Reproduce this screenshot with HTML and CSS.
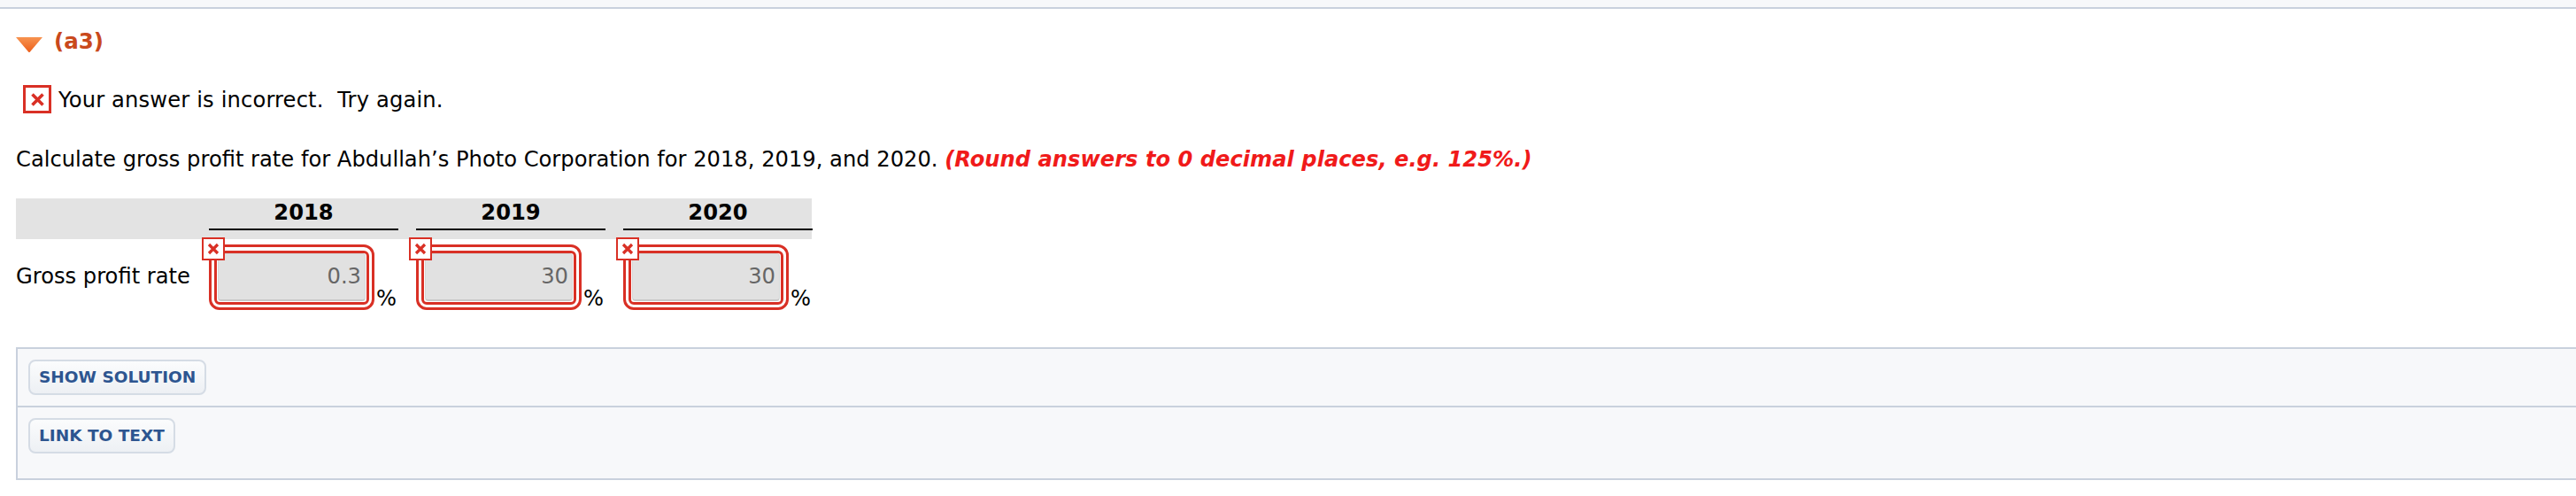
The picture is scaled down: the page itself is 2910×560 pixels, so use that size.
FILE: index.html
```html
<!DOCTYPE html>
<html lang="en">
<head>
    <meta charset="UTF-8">
    <meta name="viewport" content="width=device-width, initial-scale=1.0">
    <title>Question a3</title>
    <link rel="stylesheet" href="styles.css">
</head>
<body>
    <div class="top-bar"></div>

    <h2 class="part-title">
        <svg class="part-arrow" width="30" height="17" viewBox="0 0 30 17">
            <defs>
                <linearGradient id="arrowFill" x1="0" y1="0" x2="0" y2="1">
                    <stop offset="0" stop-color="#f79350"/>
                    <stop offset="1" stop-color="#ec5f1a"/>
                </linearGradient>
            </defs>
            <path d="M0 0H30L15.5 17H14.5Z" fill="url(#arrowFill)"/>
        </svg>
        (a3)
    </h2>

    <p class="feedback">
        <span class="x-box x-box-large">
            <svg width="17" height="17" viewBox="0 0 17 17"><path d="M2.5 2.5L14.5 14.5M14.5 2.5L2.5 14.5" stroke="#d93025" stroke-width="3.6" fill="none"/></svg>
        </span>
        <span class="feedback-text">Your answer is incorrect.&nbsp; Try again.</span>
    </p>

    <p class="question">Calculate gross profit rate for Abdullah’s Photo Corporation for 2018, 2019, and 2020. <em class="hint">(Round answers to 0 decimal places, e.g. 125%.)</em></p>

    <div class="answers">
        <div class="answers-head">
            <div class="year">2018</div>
            <div class="year">2019</div>
            <div class="year">2020</div>
        </div>
        <div class="answers-row">
            <label class="row-label">Gross profit rate</label>
            <div class="cells">
                <div class="cell">
                    <span class="x-box x-box-small">
                        <svg width="14" height="14" viewBox="0 0 14 14"><path d="M2 2L12 12M12 2L2 12" stroke="#d93025" stroke-width="3.2" fill="none"/></svg>
                    </span>
                    <div class="ring"><div class="ring-inner"><input class="field" type="text" value="0.3" disabled></div></div>
                    <span class="unit">%</span>
                </div>
                <div class="cell">
                    <span class="x-box x-box-small">
                        <svg width="14" height="14" viewBox="0 0 14 14"><path d="M2 2L12 12M12 2L2 12" stroke="#d93025" stroke-width="3.2" fill="none"/></svg>
                    </span>
                    <div class="ring"><div class="ring-inner"><input class="field" type="text" value="30" disabled></div></div>
                    <span class="unit">%</span>
                </div>
                <div class="cell">
                    <span class="x-box x-box-small">
                        <svg width="14" height="14" viewBox="0 0 14 14"><path d="M2 2L12 12M12 2L2 12" stroke="#d93025" stroke-width="3.2" fill="none"/></svg>
                    </span>
                    <div class="ring"><div class="ring-inner"><input class="field" type="text" value="30" disabled></div></div>
                    <span class="unit">%</span>
                </div>
            </div>
        </div>
    </div>

    <div class="actions">
        <div class="action-row"><a class="action-button">SHOW SOLUTION</a></div>
        <div class="action-row action-row-last"><a class="action-button">LINK TO TEXT</a></div>
    </div>
</body>
</html>
```

FILE: styles.css
```css
body {
    margin: 0;
    height: 560px;
    overflow: hidden;
    background-color: #fff;
    color: #000;
    font-family: "DejaVu Sans", Verdana, sans-serif;
    font-size: 24.2px;
}
.top-bar {
    height: 8px;
    background-color: #f7f8fa;
    border-bottom: 2px solid #c9d1dd;
}
.part-title {
    display: flex;
    align-items: center;
    gap: 13px;
    margin: 0;
    padding: 22px 0 0 18px;
    height: 30px;
    color: #c9491c;
    font-size: 24.5px;
    font-weight: bold;
    line-height: 30px;
}
.part-arrow {
    margin-top: 6px;
}
.feedback {
    display: flex;
    align-items: center;
    gap: 8px;
    margin: 0;
    padding: 34px 0 0 26px;
    height: 32px;
    line-height: 32px;
}
.feedback-text {
    padding-top: 2px;
    letter-spacing: 0.15px;
}
.x-box {
    display: flex;
    align-items: center;
    justify-content: center;
    box-sizing: border-box;
    background-color: #fff;
    border: 3px solid #d93025;
}
.x-box-large {
    width: 32px;
    height: 32px;
}
.x-box-small {
    position: absolute;
    left: -8px;
    top: -8px;
    width: 26px;
    height: 26px;
    border-width: 2px;
}
.question {
    margin: 0;
    padding: 38px 0 0 18px;
    height: 28px;
    line-height: 28px;
    white-space: nowrap;
}
.hint {
    color: #f01a1a;
    font-weight: bold;
}
.answers {
    margin: 30px 0 0 18px;
    width: 899px;
}
.answers-head {
    display: grid;
    grid-template-columns: repeat(3, 214px);
    column-gap: 20px;
    height: 46px;
    padding-left: 218px;
    box-sizing: border-box;
    background-color: #e3e3e3;
}
.year {
    height: 34px;
    line-height: 32px;
    text-align: center;
    font-weight: bold;
    border-bottom: 2px solid #000;
}
.answers-row {
    display: flex;
    padding-top: 6px;
}
.row-label {
    flex: none;
    width: 218px;
    padding-top: 20px;
    line-height: 32px;
    white-space: nowrap;
}
.cells {
    display: grid;
    grid-template-columns: repeat(3, 214px);
    column-gap: 20px;
}
.cell {
    position: relative;
    display: flex;
    align-items: flex-end;
    height: 74px;
}
.ring {
    box-sizing: border-box;
    width: 187px;
    height: 74px;
    padding: 4px 3px 3px;
    background-color: #fff;
    border: 3px solid #d93025;
    border-radius: 12px;
}
.ring-inner {
    box-sizing: border-box;
    height: 100%;
    padding: 0 1px 1px;
    border: 3px solid #d93025;
    border-radius: 6px;
}
.field {
    display: block;
    box-sizing: border-box;
    width: 100%;
    height: 100%;
    margin: 0;
    padding: 0 4px 2px 0;
    background-color: #e1e1e1;
    border: 1px solid #d6d6d6;
    border-bottom: 2px solid #c9c9c9;
    border-radius: 4px;
    color: #666;
    font-family: inherit;
    font-size: 24.2px;
    text-align: right;
    outline: none;
    opacity: 1;
}
.unit {
    margin-left: 2px;
    line-height: 26px;
}
.actions {
    margin: 42px 0 0 18px;
    background-color: #f7f8fa;
    border-top: 2px solid #c9d1dd;
    border-left: 2px solid #c9d1dd;
    border-bottom: 2px solid #c9d1dd;
}
.action-row {
    display: flex;
    align-items: flex-start;
    box-sizing: border-box;
    height: 66px;
    padding: 12px 0 0 12px;
    border-bottom: 2px solid #c9d1dd;
}
.action-row-last {
    height: 80px;
    border-bottom: 0;
}
.action-button {
    box-sizing: border-box;
    height: 40px;
    padding: 0 10px;
    background: linear-gradient(#fbfcfd, #edf0f4);
    border: 2px solid #d5dce5;
    border-radius: 8px;
    color: #2d5590;
    font-size: 18.5px;
    font-weight: bold;
    line-height: 36px;
}
```
